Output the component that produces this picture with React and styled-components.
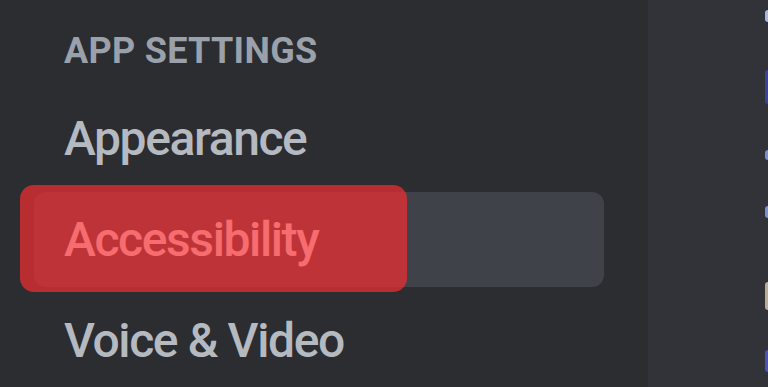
import React from "react";
import styled, { createGlobalStyle } from "styled-components";

const Global = createGlobalStyle`
  html, body {
    margin: 0;
    padding: 0;
    background: #2b2d31;
  }
  * {
    box-sizing: border-box;
  }
`;

function App() {
  const items = ["Appearance", "Accessibility", "Voice & Video"];
  const selected = 1;
  const peeks = [
    { top: 10, h: 12, color: "#aab6dc" },
    { top: 48, h: 34, color: "#3f4398" },
    { top: 46, h: 10, color: "#7990cc" },
    { top: 46, h: 12, color: "#7a93cf" },
    { top: 64, h: 28, color: "#b8ae98" },
    { top: 40, h: 22, color: "#4d52b8" },
  ];
  return (
    <Layout>
      <Global />
      <Sidebar>
        <Header>APP SETTINGS</Header>
        {items.map((item, index) => (
          <NavItem key={item} $active={index === selected}>
            {item}
          </NavItem>
        ))}
        <Highlight />
      </Sidebar>
      <Content>
        {peeks.map((p, i) => (
          <Peek key={i} $top={p.top} $h={p.h} $color={p.color} />
        ))}
      </Content>
    </Layout>
  );
}

const Layout = styled.div`
  display: flex;
  width: 768px;
  height: 387px;
  overflow: hidden;
  font-family: Roboto, "Noto Sans", sans-serif;
`;

const Sidebar = styled.div`
  position: relative;
  width: 648px;
  flex-shrink: 0;
  background-color: #2b2d31;
  padding: 33px 44px 0 34px;
  display: flex;
  flex-direction: column;
`;

const Header = styled.div`
  padding-left: 30px;
  font-size: 36px;
  line-height: 36px;
  font-weight: 700;
  letter-spacing: 0.3px;
  color: #9aa1ab;
  margin-bottom: 22px;
`;

const NavItem = styled.div`
  flex-shrink: 0;
  height: 95px;
  margin-bottom: 6px;
  padding: 0 30px;
  display: flex;
  align-items: center;
  border-radius: 12px;
  font-size: 48px;
  font-weight: 500;
  letter-spacing: -1.4px;
  color: ${(p) => (p.$active ? "#ffffff" : "#b5bac1")};
  background-color: ${(p) => (p.$active ? "#404249" : "transparent")};
`;

const Highlight = styled.div`
  position: absolute;
  left: 20px;
  top: 185px;
  width: 387px;
  height: 107px;
  border-radius: 14px;
  background-color: rgba(244, 46, 49, 0.7);
`;

const Content = styled.div`
  flex: 1;
  background-color: #313338;
  display: flex;
  flex-direction: column;
  align-items: flex-end;
`;

const Peek = styled.div`
  width: 3px;
  margin-top: ${(p) => p.$top}px;
  height: ${(p) => p.$h}px;
  border-radius: 3px 0 0 3px;
  background-color: ${(p) => p.$color};
  flex-shrink: 0;
`;

export default App;
